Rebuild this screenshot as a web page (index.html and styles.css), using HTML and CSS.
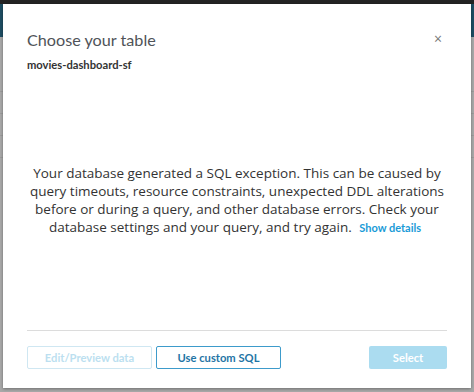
FILE: index.html
```html
<!DOCTYPE html>
<html>
<head>
<meta charset="utf-8">
<link rel="stylesheet" href="styles.css">
</head>
<body>
<div class="app">
  <div class="topbar"></div>
  <div class="band"></div>
  <div class="backdrop">
    <div class="row"></div>
    <div class="row"></div>
    <div class="row"></div>
    <div class="row"></div>
  </div>
</div>
<div class="modal">
  <div class="head">
    <h1 class="title">Choose your table</h1>
    <span class="close">×</span>
  </div>
  <div class="source">movies-dashboard-sf</div>
  <div class="body">
    <p class="msg">Your database generated a SQL exception. This can be caused by query timeouts, resource constraints, unexpected DDL alterations before or during a query, and other database errors. Check your database settings and your query, and try again. <a class="details">Show details</a></p>
  </div>
  <div class="footer">
    <button class="btn btn-disabled">Edit/Preview data</button>
    <button class="btn btn-outline">Use custom SQL</button>
    <span class="spacer"></span>
    <button class="btn btn-primary">Select</button>
  </div>
</div>
</body>
</html>
```

FILE: styles.css
```css
html, body {
  margin: 0;
  padding: 0;
  width: 474px;
  height: 392px;
  overflow: hidden;
}
body {
  background: #a9a9a9;
  font-family: "Open Sans", "Liberation Sans", sans-serif;
  position: relative;
}
.app {
  display: flex;
  flex-direction: column;
  height: 392px;
}
.topbar {
  height: 4px;
  background: #232323;
}
.band {
  height: 33px;
  background: #1e4e63;
}
.backdrop {
  flex: 1;
  display: flex;
  flex-direction: column;
  gap: 21px;
  padding-top: 54px;
}
.row {
  height: 1px;
  background: #9c9c9c;
}
.modal {
  position: absolute;
  left: 3px;
  top: 4px;
  width: 468px;
  height: 384px;
  box-sizing: border-box;
  background: #fff;
  box-shadow: 0 1px 3px rgba(0,0,0,0.35);
  padding: 25px 24px 19px 24px;
  display: flex;
  flex-direction: column;
}
.head {
  display: flex;
  justify-content: space-between;
  align-items: center;
}
.title {
  margin: 0;
  font-family: Lato, "Open Sans", sans-serif;
  font-size: 16.2px;
  font-weight: 400;
  color: #4f5358;
  line-height: 22px;
}
.close {
  color: #777;
  font-size: 14px;
  line-height: 14px;
  margin-right: 5px;
  margin-top: -3px;
}
.source {
  margin-top: 6px;
  font-family: Lato, "Open Sans", sans-serif;
  font-size: 11.2px;
  font-weight: 700;
  color: #333;
  line-height: 16px;
}
.body {
  flex: 1;
  display: flex;
  align-items: center;
  justify-content: center;
  padding-bottom: 4px;
}
.msg {
  margin: 0;
  text-align: center;
  font-size: 13.5px;
  line-height: 18px;
  color: #333;
}
.details {
  display: inline-block;
  color: #1a9bd7;
  font-family: Lato, "Open Sans", sans-serif;
  font-size: 11px;
  line-height: 14px;
  font-weight: 700;
  margin-left: 4px;
  margin-right: 4px;
}
.footer {
  border-top: 1px solid #dcdcdc;
  padding-top: 15px;
  display: flex;
  gap: 4px;
}
.spacer {
  flex: 1;
}
.btn {
  height: 23px;
  box-sizing: border-box;
  font-family: Lato, "Open Sans", sans-serif;
  font-size: 11.2px;
  font-weight: 700;
  border-radius: 2px;
  padding: 0;
  background: #fff;
}
.btn-disabled {
  width: 125px;
  border: 1px solid #cfe7f2;
  color: #bcdff0;
}
.btn-outline {
  width: 125px;
  border: 1px solid #3d9bcb;
  color: #1f75a5;
}
.btn-primary {
  width: 78px;
  border: none;
  background: #abdcf0;
  color: #fff;
}
```
